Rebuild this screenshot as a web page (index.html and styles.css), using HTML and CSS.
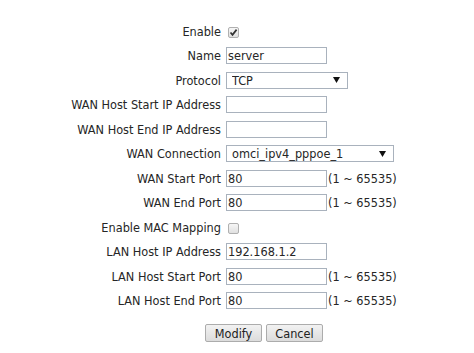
FILE: index.html
```html
<!doctype html>
<html lang="en">
  <head>
    <meta charset="UTF-8" />
    <title>Port Forwarding</title>
    <link rel="stylesheet" href="styles.css">
  </head>
  <body>
    <table class="form">
      <tr>
        <td class="label">Enable</td>
        <td><span class="check checked"><svg viewBox="0 0 11 11" width="11" height="11"><path d="M2.5 5.5 L4.5 7.8 L8.6 2.6" fill="none" stroke="#333" stroke-width="1.7"/></svg></span></td>
      </tr>
      <tr>
        <td class="label">Name</td>
        <td><input class="text" type="text" value="server"></td>
      </tr>
      <tr>
        <td class="label">Protocol</td>
        <td><select class="select short"><option>TCP</option></select></td>
      </tr>
      <tr>
        <td class="label">WAN Host Start IP Address</td>
        <td><input class="text" type="text"></td>
      </tr>
      <tr>
        <td class="label">WAN Host End IP Address</td>
        <td><input class="text" type="text"></td>
      </tr>
      <tr>
        <td class="label">WAN Connection</td>
        <td><select class="select wide"><option>omci_ipv4_pppoe_1</option></select></td>
      </tr>
      <tr>
        <td class="label">WAN Start Port</td>
        <td><input class="text" type="text" value="80"><span class="range">(1 ~ 65535)</span></td>
      </tr>
      <tr>
        <td class="label">WAN End Port</td>
        <td><input class="text" type="text" value="80"><span class="range">(1 ~ 65535)</span></td>
      </tr>
      <tr>
        <td class="label">Enable MAC Mapping</td>
        <td><span class="check"></span></td>
      </tr>
      <tr>
        <td class="label">LAN Host IP Address</td>
        <td><input class="text" type="text" value="192.168.1.2"></td>
      </tr>
      <tr>
        <td class="label">LAN Host Start Port</td>
        <td><input class="text" type="text" value="80"><span class="range">(1 ~ 65535)</span></td>
      </tr>
      <tr>
        <td class="label">LAN Host End Port</td>
        <td><input class="text" type="text" value="80"><span class="range">(1 ~ 65535)</span></td>
      </tr>
    </table>

    <div class="buttons">
      <button class="btn">Modify</button>
      <button class="btn">Cancel</button>
    </div>
  </body>
</html>
```

FILE: styles.css
```css
body {
  margin: 0;
  background: #fff;
  color: #262626;
  font-family: "DejaVu Sans Condensed", "DejaVu Sans", sans-serif;
  font-size: 12.6px;
}

.form {
  border-collapse: collapse;
  margin: 19px 0 0 0;
  width: 400px;
}

.form td {
  height: 24.5px;
  padding: 0;
  vertical-align: middle;
  white-space: nowrap;
}

.form td.label {
  width: 221px;
  padding-right: 5px;
  text-align: right;
}

.text {
  box-sizing: border-box;
  width: 101px;
  height: 17px;
  margin: 0;
  padding: 0 1px;
  border: 1px solid #a9b2bd;
  font-family: inherit;
  font-size: 12.6px;
  color: #262626;
  vertical-align: middle;
}

.select {
  box-sizing: border-box;
  -webkit-appearance: none;
  appearance: none;
  height: 17px;
  margin: 0;
  padding: 0 5px;
  border: 1px solid #a9b2bd;
  border-radius: 0;
  background: #fff url("data:image/svg+xml,%3Csvg xmlns='http://www.w3.org/2000/svg' width='7' height='6'%3E%3Cpath d='M0 0H7L3.5 6Z' fill='%23111'/%3E%3C/svg%3E") no-repeat right 7px center;
  font-family: inherit;
  font-size: 12.6px;
  color: #262626;
  vertical-align: middle;
}

.select.short {
  width: 122px;
}

.select.wide {
  width: 168px;
}

.range {
  margin-left: 1px;
  vertical-align: middle;
}

.check {
  display: inline-block;
  box-sizing: border-box;
  width: 11px;
  height: 11px;
  margin-left: 2px;
  border: 1px solid #b0b0b0;
  border-radius: 2px;
  background: linear-gradient(#f6f6f6, #e0e0e0);
  vertical-align: middle;
}

.check svg {
  display: block;
  margin: -1px;
}

.buttons {
  display: flex;
  gap: 4px;
  margin: 11px 0 0 205px;
}

.btn {
  box-sizing: border-box;
  width: 57px;
  height: 18px;
  padding: 0;
  border: 1px solid #acacac;
  border-radius: 2px;
  background: linear-gradient(#f2f2f2, #dcdcdc);
  font-family: inherit;
  font-size: 12.6px;
  color: #222;
}
```
